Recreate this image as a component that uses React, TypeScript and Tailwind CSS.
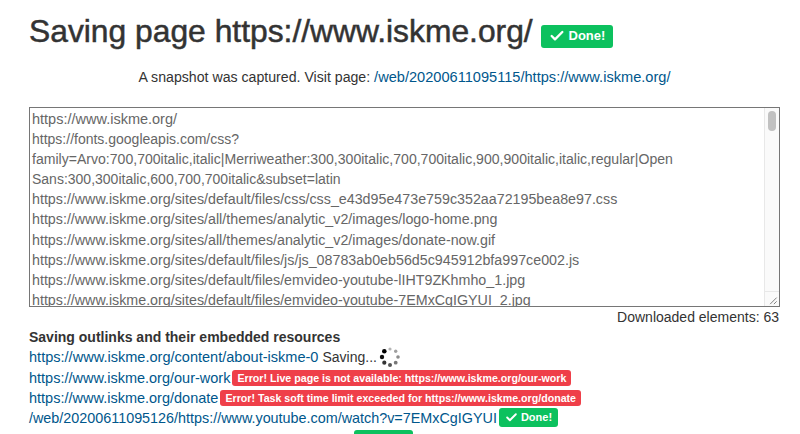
import { Check } from 'lucide-react';

const captured = [
  { text: 'https://www.iskme.org/', size: 'text-[14.5px]' },
  { text: 'https://fonts.googleapis.com/css?', size: 'text-[14px]' },
  { text: 'family=Arvo:700,700italic,italic|Merriweather:300,300italic,700,700italic,900,900italic,italic,regular|Open', size: 'text-[14.07px]' },
  { text: 'Sans:300,300italic,600,700,700italic&subset=latin', size: 'text-[14px]' },
  { text: 'https://www.iskme.org/sites/default/files/css/css_e43d95e473e759c352aa72195bea8e97.css', size: 'text-[14.27px]' },
  { text: 'https://www.iskme.org/sites/all/themes/analytic_v2/images/logo-home.png', size: 'text-[14.27px]' },
  { text: 'https://www.iskme.org/sites/all/themes/analytic_v2/images/donate-now.gif', size: 'text-[14.27px]' },
  { text: 'https://www.iskme.org/sites/default/files/js/js_08783ab0eb56d5c945912bfa997ce002.js', size: 'text-[14.27px]' },
  { text: 'https://www.iskme.org/sites/default/files/emvideo-youtube-lIHT9ZKhmho_1.jpg', size: 'text-[14.27px]' },
  { text: 'https://www.iskme.org/sites/default/files/emvideo-youtube-7EMxCgIGYUI_2.jpg', size: 'text-[14.27px]' },
];

const spinnerDots = [
  { x: 12, y: 4, r: 1.6, fill: '#b5b5b5' },
  { x: 17.7, y: 6.3, r: 1.7, fill: '#a0a0a0' },
  { x: 20, y: 12, r: 1.8, fill: '#8c8c8c' },
  { x: 17.7, y: 17.7, r: 1.9, fill: '#777777' },
  { x: 12, y: 20, r: 2, fill: '#555555' },
  { x: 6.3, y: 17.7, r: 2.1, fill: '#333333' },
  { x: 4, y: 12, r: 2.2, fill: '#111111' },
  { x: 6.3, y: 6.3, r: 2.3, fill: '#000000' },
];

function Done({ large }: { large?: boolean }) {
  return (
    <span
      className={
        large
          ? 'inline-flex items-center gap-[4px] h-[23px] px-[8px] ml-[-1px] rounded-[3px] bg-[#0cc15e] text-white text-[13px] font-bold align-[-2px] tracking-normal [-webkit-text-stroke:0px]'
          : 'inline-flex items-center gap-[3px] h-[19px] px-[6px] rounded-[3px] bg-[#0cc15e] text-white text-[11px] font-bold'
      }
    >
      <Check size={large ? 16 : 13} strokeWidth={3.5} />
      Done!
    </span>
  );
}

function ErrorLabel({ children }: { children: string }) {
  return (
    <span className="inline-flex items-center h-[16px] px-[5px] ml-[2px] rounded-[3px] bg-[#ef3f49] text-white text-[10.65px] font-bold whitespace-nowrap">
      {children}
    </span>
  );
}

export default function App() {
  return (
    <div className="h-[434px] w-[800px] overflow-hidden bg-white px-[29px] text-[14px] leading-[20px] text-[#333333] font-['Liberation_Sans',Arial,sans-serif]">
      <h1 className="pt-[13px] text-[31.8px] leading-[36px] font-normal whitespace-nowrap [-webkit-text-stroke:0.5px_#333333]">
        Saving page https://www.iskme.org/ <Done large />
      </h1>
      <p className="mt-[18px] text-center pl-[9px] text-[14.15px]">
        A snapshot was captured. Visit page:{' '}
        <a className="text-[#00578c] text-[14.6px]">/web/20200611095115/https://www.iskme.org/</a>
      </p>

      <div className="mt-[20px] h-[200px] w-[751px] flex border border-[#767676] bg-white">
        <div className="flex-1 overflow-hidden px-[2px] pt-[1px] text-[#666666] whitespace-nowrap leading-[20.1px]">
          {captured.map((line) => (
            <div key={line.text} className={line.size}>
              {line.text}
            </div>
          ))}
        </div>
        <div className="w-[15px] flex flex-col justify-between border-l border-[#e8e8e8] bg-[#fafafa]">
          <div className="mx-auto mt-[3px] h-[20px] w-[8px] rounded-full bg-[#c1c1c1]" />
          <svg width="14" height="15" viewBox="0 0 14 15" className="border-t border-[#e8e8e8]">
            <path d="M5 13 L12 6 M9 13 L12 10" stroke="#777777" strokeWidth="1" fill="none" />
          </svg>
        </div>
      </div>
      <div className="w-[750px] text-right">Downloaded elements: 63</div>

      <div className="font-bold">Saving outlinks and their embedded resources</div>
      <div className="flex items-center h-[20px]">
        <a className="text-[#00578c] text-[14.55px]">https://www.iskme.org/content/about-iskme-0</a>
        <span className="ml-[4px]">Saving...</span>
        <svg width="24" height="24" viewBox="0 0 24 24" className="ml-[1px]">
          {spinnerDots.map((d) => (
            <circle key={`${d.x}-${d.y}`} cx={d.x} cy={d.y} r={d.r} fill={d.fill} />
          ))}
        </svg>
      </div>
      <div className="flex items-center h-[20px] mt-[1px]">
        <a className="text-[#00578c] text-[14.5px]">https://www.iskme.org/our-work</a>
        <ErrorLabel>Error! Live page is not available: https://www.iskme.org/our-work</ErrorLabel>
      </div>
      <div className="flex items-center h-[20px]">
        <a className="text-[#00578c] text-[14.5px]">https://www.iskme.org/donate</a>
        <ErrorLabel>Error! Task soft time limit exceeded for https://www.iskme.org/donate</ErrorLabel>
      </div>
      <div className="flex items-center h-[20px]">
        <a className="text-[#00578c] text-[14.37px]">/web/20200611095126/https://www.youtube.com/watch?v=7EMxCgIGYUI</a>
        <span className="ml-[2px]">
          <Done />
        </span>
      </div>
      <div className="flex items-center h-[20px] mt-[2px]">
        <a className="text-[#00578c] text-[14.37px]">/web/20200611095126/https://www.iskme.org/blog</a>
        <span className="ml-[5px]">
          <Done />
        </span>
      </div>
    </div>
  );
}
